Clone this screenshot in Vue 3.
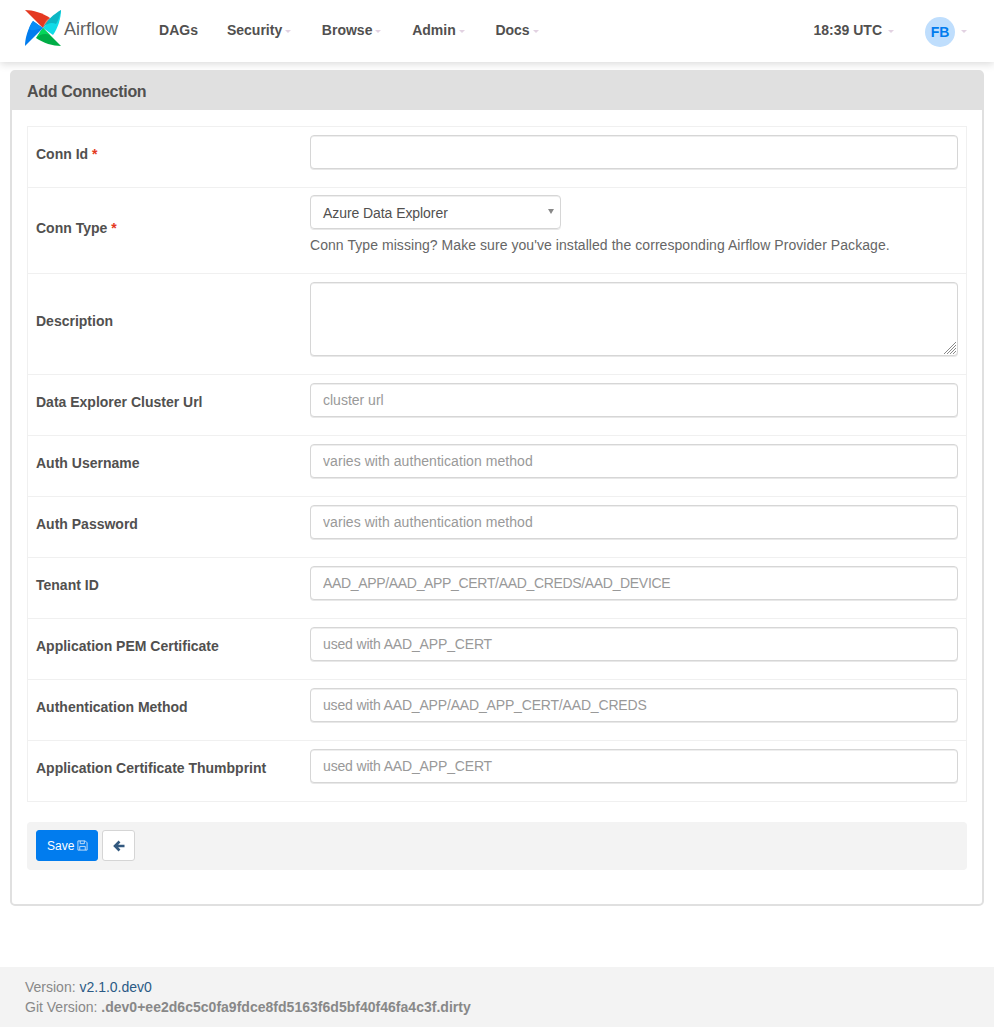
<template>
  <div class="page">
    <nav class="navbar">
      <a class="brand" href="#">
        <svg class="logo" viewBox="0 0 36 36" width="36" height="36">
          <path d="M0 0 C8 0 18 3 25 8 L18 18 Z" fill="#e43921" />
          <path d="M25 8 C22 9 19 13 18 18 Z" fill="#f37f6b" />
          <path d="M36 0 C36 8 33 18 28 25 L18 18 Z" fill="#11dbe8" />
          <path d="M36 0 C29 4 22 10 18 18 C22 13 27 12 31 14 C34 9 35 5 36 0 Z" fill="#0cb6c4" />
          <path d="M36 36 C28 36 18 33 11 28 L18 18 Z" fill="#00ad46" />
          <path d="M11 28 C14 24 15 21 18 18 C20 20 22 22 25 25 C20 23 15 24 11 28 Z" fill="#04d659" />
          <path d="M0 36 C0 28 3 18 8 11 L18 18 Z" fill="#017cee" />
          <path d="M8 11 C12 14 15 16 18 18 C12 19 7 22 4 19 C5 16 6 13 8 11 Z" fill="#0a8df5" />
        </svg>
        <span class="brand-name">Airflow</span>
      </a>
      <ul class="menu">
        <li v-for="item in menu" :key="item.label" class="menu-item">
          {{ item.label }}<span v-if="item.caret" class="caret"></span>
        </li>
      </ul>
      <div class="nav-right">
        <span class="clock">18:39 UTC<span class="caret clock-caret"></span></span>
        <span class="avatar">FB</span>
        <span class="caret avatar-caret"></span>
      </div>
    </nav>

    <main class="content">
      <section class="panel">
        <h4 class="panel-title">Add Connection</h4>
        <div class="panel-body">
          <table class="form-table">
            <tbody>
              <tr>
                <td class="label">Conn Id <span class="req">*</span></td>
                <td class="field"><input class="input" type="text" /></td>
              </tr>
              <tr>
                <td class="label">Conn Type <span class="req">*</span></td>
                <td class="field">
                  <div class="select">Azure Data Explorer<span class="select-arrow"></span></div>
                  <p class="help">Conn Type missing? Make sure you've installed the corresponding Airflow Provider Package.</p>
                </td>
              </tr>
              <tr>
                <td class="label">Description</td>
                <td class="field">
                  <div class="textarea-wrap">
                    <textarea class="input textarea"></textarea>
                    <svg class="grip" viewBox="0 0 14 14" width="14" height="14">
                      <path d="M1 13 L13 1 M4 13 L13 4 M7 13 L13 7 M10 13 L13 10" stroke="#8a8a8a" stroke-width="1" fill="none" />
                    </svg>
                  </div>
                </td>
              </tr>
              <tr v-for="row in rows" :key="row.label">
                <td class="label">{{ row.label }}</td>
                <td class="field">
                  <input class="input" type="text" :placeholder="row.placeholder" :style="{ letterSpacing: row.spacing + 'px' }" />
                </td>
              </tr>
            </tbody>
          </table>

          <div class="actions">
            <button class="btn btn-save" type="button">
              Save
              <svg class="save-icon" viewBox="0 0 12 12" width="11" height="11">
                <path d="M1 1 H9 L11 3 V11 H1 Z" fill="none" stroke="#cfe4fb" stroke-width="1" />
                <path d="M3.5 1 V4 H8 V1 M3 11 V7 H9 V11" fill="none" stroke="#cfe4fb" stroke-width="1" />
              </svg>
            </button>
            <button class="btn btn-back" type="button" aria-label="Back">
              <svg viewBox="0 0 12 12" width="12" height="12">
                <path d="M6.5 1.5 L2 6 L6.5 10.5 M2.5 6 H11.5" fill="none" stroke="#33597f" stroke-width="2.6" />
              </svg>
            </button>
          </div>
        </div>
      </section>
    </main>

    <footer class="footer">
      <div>Version: <a class="version" href="#">v2.1.0.dev0</a></div>
      <div>Git Version: <strong class="git-hash">.dev0+ee2d6c5c0fa9fdce8fd5163f6d5bf40f46fa4c3f.dirty</strong></div>
    </footer>
  </div>
</template>

<script setup>
const menu = [
  { label: 'DAGs', caret: false },
  { label: 'Security', caret: true },
  { label: 'Browse', caret: true },
  { label: 'Admin', caret: true },
  { label: 'Docs', caret: true }
]

// spacing: the placeholders with underscores run narrower in the original font
const rows = [
  { label: 'Data Explorer Cluster Url', placeholder: 'cluster url', spacing: 0 },
  { label: 'Auth Username', placeholder: 'varies with authentication method', spacing: 0.06 },
  { label: 'Auth Password', placeholder: 'varies with authentication method', spacing: 0.06 },
  { label: 'Tenant ID', placeholder: 'AAD_APP/AAD_APP_CERT/AAD_CREDS/AAD_DEVICE', spacing: -0.33 },
  { label: 'Application PEM Certificate', placeholder: 'used with AAD_APP_CERT', spacing: -0.16 },
  { label: 'Authentication Method', placeholder: 'used with AAD_APP/AAD_APP_CERT/AAD_CREDS', spacing: -0.17 },
  { label: 'Application Certificate Thumbprint', placeholder: 'used with AAD_APP_CERT', spacing: -0.16 }
]
</script>

<style scoped>
.page {
  display: flex;
  flex-direction: column;
  min-height: 1027px;
  font-family: "Liberation Sans", Arial, sans-serif;
  font-size: 14px;
  color: #51504f;
  background: #fff;
}

.navbar {
  display: flex;
  align-items: center;
  height: 62px;
  padding: 0 25px;
  box-sizing: border-box;
  background: #fff;
  box-shadow: 0 2px 8px rgba(0, 0, 0, 0.15);
}

.brand {
  display: flex;
  align-items: center;
  text-decoration: none;
}

.logo {
  display: block;
  margin-top: -6px;
}

.brand-name {
  margin-left: 3px;
  margin-top: -4px;
  font-size: 18px;
  color: #5f5f5f;
}

.menu {
  display: flex;
  margin: -2px 0 0 41px;
  padding: 0;
  list-style: none;
}

.menu-item {
  margin-right: 30.7px;
  font-weight: bold;
}

.menu-item:first-child {
  margin-right: 29px;
}

.caret {
  display: inline-block;
  width: 0;
  height: 0;
  margin-left: 3px;
  vertical-align: 2px;
  border-top: 3px solid #e2d2e2;
  border-left: 3.5px solid transparent;
  border-right: 3.5px solid transparent;
}

.nav-right {
  display: flex;
  align-items: center;
  margin-left: auto;
  margin-right: 2px;
}

.clock {
  margin-top: -2px;
  font-weight: bold;
}

.clock-caret {
  margin-left: 6px;
}

.avatar {
  display: flex;
  align-items: center;
  justify-content: center;
  width: 30px;
  height: 30px;
  margin-top: 2px;
  margin-left: 31px;
  border-radius: 50%;
  background: #bfdefd;
  color: #017cee;
  font-weight: bold;
}

.avatar-caret {
  margin-left: 6px;
  vertical-align: middle;
}

.content {
  flex: 1;
  padding: 8px 10px 61px;
}

.panel {
  border: 2px solid #e0e0e0;
  border-radius: 5px;
  background: #fff;
}

.panel-title {
  margin: 0;
  padding: 11px 15px 0;
  height: 38px;
  box-sizing: border-box;
  background: #e0e0e0;
  font-size: 16px;
  line-height: 18px;
  font-weight: bold;
  letter-spacing: -0.3px;
  color: #51504f;
}

.panel-body {
  padding: 16px 15px 34px;
}

.form-table {
  width: 100%;
  border-collapse: collapse;
  border: 1px solid #f0f0f0;
}

.form-table td {
  border-top: 1px solid #f0f0f0;
  vertical-align: middle;
}

.label {
  width: 258px;
  padding: 8px 8px 14px;
  font-weight: bold;
}

.field {
  padding: 8px 8px 18px;
}

.req {
  color: #e43921;
}

.input {
  display: block;
  width: 100%;
  height: 34px;
  padding: 6px 12px;
  box-sizing: border-box;
  border: 1px solid #d6d6d6;
  border-radius: 4px;
  background: #fff;
  box-shadow: inset 0 1px 0 #eee, 0 1px 0 #e8e8e8;
  font-family: inherit;
  font-size: 14px;
  color: #51504f;
  outline: none;
}

.input::placeholder {
  color: #999;
  opacity: 1;
}

.textarea-wrap {
  position: relative;
}

.textarea {
  height: 74px;
  resize: none;
}

.grip {
  position: absolute;
  right: 1px;
  bottom: 1px;
}

.select {
  position: relative;
  width: 251px;
  height: 34px;
  margin-top: -1px;
  padding: 0 12px;
  box-sizing: border-box;
  border: 1px solid #d6d6d6;
  border-radius: 4px;
  box-shadow: inset 0 1px 0 #eee, 0 1px 0 #e8e8e8;
  line-height: 34px;
  letter-spacing: -0.07px;
  color: #51504f;
}

.select-arrow {
  position: absolute;
  right: 6px;
  top: 13px;
  border-top: 5px solid #888;
  border-left: 3px solid transparent;
  border-right: 3px solid transparent;
}

.help {
  margin: 6px 0 0;
  line-height: 20px;
  letter-spacing: 0.06px;
  color: #666;
}

.actions {
  display: flex;
  gap: 4px;
  margin-top: 20px;
  padding: 8px 9px 9px;
  border-radius: 4px;
  background: #f3f3f3;
}

.btn {
  height: 31px;
  box-sizing: border-box;
  border-radius: 3px;
  font-family: inherit;
  font-size: 12px;
}

.btn-save {
  display: flex;
  align-items: center;
  gap: 3px;
  width: 62px;
  padding: 0 0 0 10px;
  border: 1px solid #017cee;
  background: #017cee;
  color: #fff;
}

.btn-back {
  display: flex;
  align-items: center;
  justify-content: center;
  width: 33px;
  padding: 0;
  border: 1px solid #d5d5d5;
  background: #fff;
}

.footer {
  height: 60px;
  padding: 10px 25px 0;
  box-sizing: border-box;
  background: #f3f3f3;
  line-height: 20px;
  color: #888;
}

.git-hash {
  letter-spacing: 0.02px;
}

.version {
  color: #2b5a85;
  text-decoration: none;
}
</style>
